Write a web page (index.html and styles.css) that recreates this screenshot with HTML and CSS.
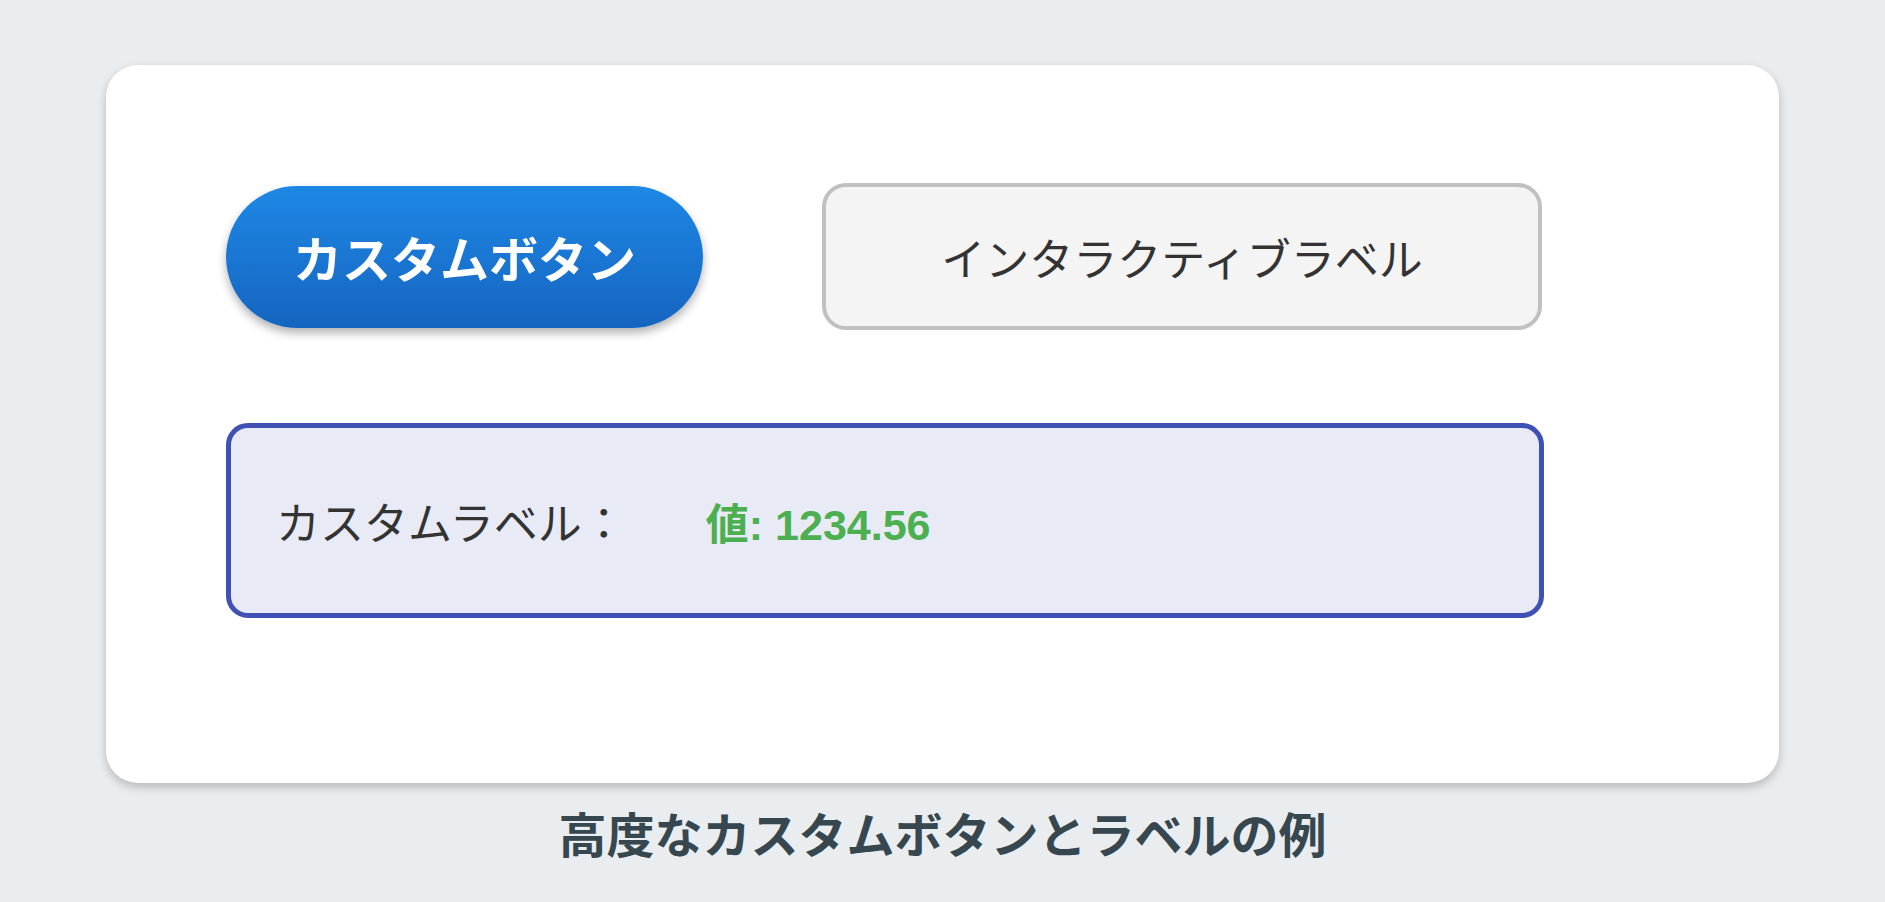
FILE: index.html
```html
<!DOCTYPE html>
<html lang="ja">
<head>
<meta charset="utf-8">
<title>高度なカスタムボタンとラベルの例</title>
<link rel="stylesheet" href="styles.css">
</head>
<body>
<main class="page">
  <section class="card">
    <div class="row-top">
      <button class="custom-button" type="button">カスタムボタン</button>
      <div class="interactive-label">インタラクティブラベル</div>
    </div>
    <div class="custom-label">
      <span class="custom-label-text">カスタムラベル：</span>
      <span class="custom-label-value">値: 1234.56</span>
    </div>
  </section>
  <h1 class="caption">高度なカスタムボタンとラベルの例</h1>
</main>
</body>
</html>
```
FILE: styles.css
```css
html, body {
  margin: 0;
  padding: 0;
  background: #e9edf0;
  font-family: "Liberation Sans", "Noto Sans CJK JP", sans-serif;
}

.page {
  display: flex;
  flex-direction: column;
  align-items: center;
  padding-top: 65px;
}

.card {
  box-sizing: border-box;
  width: 1673px;
  height: 718px;
  background: #ffffff;
  border-radius: 32px;
  box-shadow: 0 4px 10px rgba(0, 0, 0, 0.22);
  padding: 118px 120px 0 118px;
  display: flex;
  flex-direction: column;
  gap: 93px;
}

.row-top {
  display: flex;
  align-items: center;
  gap: 119px;
}

.custom-button {
  box-sizing: border-box;
  width: 477px;
  height: 142px;
  margin-left: 2px;
  border: none;
  border-radius: 71px;
  background: linear-gradient(to bottom, #1e88e5, #1565c0);
  color: #ffffff;
  font-family: "Liberation Sans", "Noto Sans CJK JP", sans-serif;
  font-weight: bold;
  font-size: 49px;
  box-shadow: 0 5px 10px rgba(0, 0, 0, 0.3);
  padding: 0;
}

.interactive-label {
  box-sizing: border-box;
  width: 720px;
  height: 147px;
  border: 4px solid #c0c0c0;
  border-radius: 24px;
  background: #f4f4f4;
  color: #333333;
  font-size: 44px;
  display: flex;
  align-items: center;
  justify-content: center;
}

.custom-label {
  box-sizing: border-box;
  width: 1318px;
  height: 195px;
  margin-left: 2px;
  border: 5px solid #3f51b5;
  border-radius: 22px;
  background: #e8eaf6;
  display: flex;
  align-items: center;
  padding-left: 45px;
}

.custom-label-text {
  color: #333333;
  font-size: 44px;
}

.custom-label-value {
  color: #4caf50;
  font-size: 43px;
  font-weight: bold;
  margin-left: 80px;
}

.caption {
  margin: 25px 0 0;
  color: #37474f;
  font-size: 48px;
  font-weight: bold;
  line-height: 1.2;
}
```
